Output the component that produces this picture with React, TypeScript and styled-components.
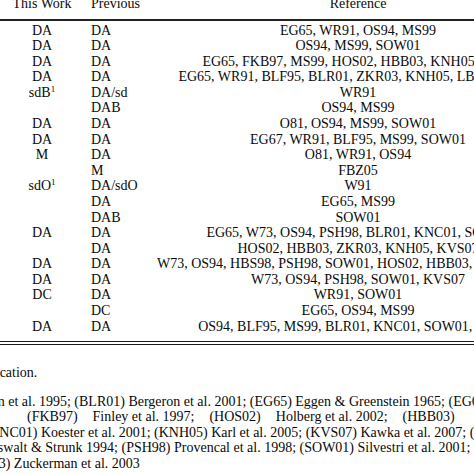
import React from "react";
import styled, { createGlobalStyle } from "styled-components";

const GlobalStyle = createGlobalStyle`
  html, body { margin: 0; padding: 0; background: #ffffff; }
  body { overflow: hidden; }
`;

const Page = styled.div`
  width: 474px;
  height: 474px;
  overflow: hidden;
  background: #ffffff;
  color: #0a0a0a;
  font-family: "Liberation Serif", "Times New Roman", serif;
  font-size: 14px;
  line-height: 15.58px;
  font-variant-ligatures: none;
`;

const Table = styled.div`
  width: 536px;
  margin-top: -4.5px;
`;

const Row = styled.div`
  display: grid;
  grid-template-columns: 84px 96px 356px;
  white-space: nowrap;
`;

const HeadRow = styled(Row)`
  padding-bottom: 8px;
`;

const TypeCell = styled.div`
  text-align: center;
`;

const PrevCell = styled.div`
  padding-left: 7px;
`;

const RefCell = styled.div`
  display: flex;
  justify-content: center;
`;

const Sup = styled.sup`
  font-size: 9px;
  line-height: 0;
  vertical-align: 5px;
`;

const Rule = styled.div`
  height: 2px;
  background: #222222;
  margin-bottom: 1.5px;
`;

const DoubleRule = styled.div`
  margin-top: 6.9px;
  height: 1.5px;
  border-top: 1px solid #1a1a1a;
  border-bottom: 1px solid #1a1a1a;
`;

const Notes = styled.div`
  white-space: nowrap;
`;

const NoteLine = styled.div<{ $shift: number; $top?: number }>`
  margin-left: ${(p) => p.$shift}px;
  margin-top: ${(p) => p.$top ?? 0}px;
`;

const SpreadLine = styled(NoteLine)`
  display: flex;
  gap: 15px;
`;

type RowData = { type?: string; sup?: boolean; prev: string; refs: string };

const rows: RowData[] = [
  { type: "DA", prev: "DA", refs: "EG65, WR91, OS94, MS99" },
  { type: "DA", prev: "DA", refs: "OS94, MS99, SOW01" },
  { type: "DA", prev: "DA", refs: "EG65, FKB97, MS99, HOS02, HBB03, KNH05, LB10" },
  { type: "DA", prev: "DA", refs: "EG65, WR91, BLF95, BLR01, ZKR03, KNH05, LBH05, LB10" },
  { type: "sdB", sup: true, prev: "DA/sd", refs: "WR91" },
  { prev: "DAB", refs: "OS94, MS99" },
  { type: "DA", prev: "DA", refs: "O81, OS94, MS99, SOW01" },
  { type: "DA", prev: "DA", refs: "EG67, WR91, BLF95, MS99, SOW01" },
  { type: "M", prev: "DA", refs: "O81, WR91, OS94" },
  { prev: "M", refs: "FBZ05" },
  { type: "sdO", sup: true, prev: "DA/sdO", refs: "W91" },
  { prev: "DA", refs: "EG65, MS99" },
  { prev: "DAB", refs: "SOW01" },
  { type: "DA", prev: "DA", refs: "EG65, W73, OS94, PSH98, BLR01, KNC01, SOW01" },
  { prev: "DA", refs: "HOS02, HBB03, ZKR03, KNH05, KVS07" },
  { type: "DA", prev: "DA", refs: "W73, OS94, HBS98, PSH98, SOW01, HOS02, HBB03, KNH05, LB10" },
  { type: "DA", prev: "DA", refs: "W73, OS94, PSH98, SOW01, KVS07" },
  { type: "DC", prev: "DA", refs: "WR91, SOW01" },
  { prev: "DC", refs: "EG65, OS94, MS99" },
  { type: "DA", prev: "DA", refs: "OS94, BLF95, MS99, BLR01, KNC01, SOW01, KVS07" },
];

export default function App() {
  return (
    <>
      <GlobalStyle />
      <Page>
        <Table>
          <HeadRow>
            <TypeCell>This Work</TypeCell>
            <PrevCell>Previous</PrevCell>
            <RefCell>
              <span>Reference</span>
            </RefCell>
          </HeadRow>
          <Rule />
          {rows.map((r, i) => (
            <Row key={i}>
              <TypeCell>
                {r.type ?? ""}
                {r.sup && <Sup>1</Sup>}
              </TypeCell>
              <PrevCell>{r.prev}</PrevCell>
              <RefCell>
                <span>{r.refs}</span>
              </RefCell>
            </Row>
          ))}
          <DoubleRule />
        </Table>
        <Notes>
          <NoteLine $shift={-40} $top={20}>
            classification.
          </NoteLine>
          <NoteLine $shift={-99.6} $top={13.4}>
            (BLF95) Bergeron et al. 1995; (BLR01) Bergeron et al. 2001; (EG65) Eggen &amp; Greenstein 1965; (EG67) Eggen &amp; Greenstein 1967;
          </NoteLine>
          <SpreadLine $shift={27}>
            <span>(FKB97)</span>
            <span>Finley et al. 1997;</span>
            <span>(HOS02)</span>
            <span>Holberg et al. 2002;</span>
            <span>(HBB03)</span>
          </SpreadLine>
          <NoteLine $shift={-15.5}>
            (KNC01) Koester et al. 2001; (KNH05) Karl et al. 2005; (KVS07) Kawka et al. 2007; (LBH05) Liebert et al. 2005;
          </NoteLine>
          <NoteLine $shift={-57}>
            (OS94) Oswalt &amp; Strunk 1994; (PSH98) Provencal et al. 1998; (SOW01) Silvestri et al. 2001; (W73) Wegner 1973;
          </NoteLine>
          <NoteLine $shift={-41}>(ZKR03) Zuckerman et al. 2003</NoteLine>
        </Notes>
      </Page>
    </>
  );
}
